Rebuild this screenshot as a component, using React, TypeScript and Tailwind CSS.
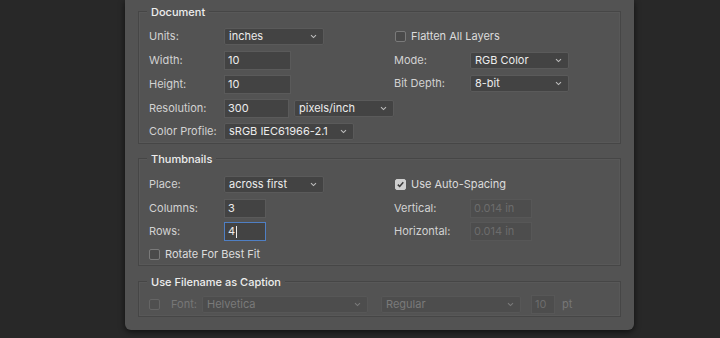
import React from "react";

const Chevron = ({ dim = false }: { dim?: boolean }) => (
  <svg width="7" height="5" viewBox="0 0 7 5" className="shrink-0">
    <path d="M1 1.2 L3.5 3.6 L6 1.2" fill="none" stroke={dim ? "#7a7a7a" : "#bdbdbd"} strokeWidth="1.1" />
  </svg>
);

const Select = ({ value, w, dim = false }: { value: string; w: string; dim?: boolean }) => (
  <div
    className={`${w} h-[17px] flex items-center justify-between pl-[4px] pr-[6px] rounded-[2px] border ${
      dim ? "bg-[#4d4d4d] border-[#575757] text-[#7a7a7a]" : "bg-[#434343] border-[#5a5a5a] text-[#ececec]"
    }`}
  >
    <span className="leading-none">{value}</span>
    <Chevron dim={dim} />
  </div>
);

const Input = ({ value, w, dim = false, focus = false }: { value: string; w: string; dim?: boolean; focus?: boolean }) => (
  <div
    className={`${w} h-[19px] flex items-center pl-[3px] border ${
      focus
        ? "bg-[#434343] border-[#4f7fc4] text-[#ececec]"
        : dim
        ? "bg-[#4d4d4d] border-[#575757] text-[#6c6c6c]"
        : "bg-[#434343] border-[#5a5a5a] text-[#ececec]"
    }`}
  >
    <span className="leading-none">{value}</span>
    {focus && <span className="w-px h-[12px] bg-[#ececec] ml-[1px]" />}
  </div>
);

const Check = ({ checked = false, dim = false }: { checked?: boolean; dim?: boolean }) => (
  <div
    className={`w-[11px] h-[11px] rounded-[2px] border flex items-center justify-center ${
      checked ? "bg-[#cfcfcf] border-[#cfcfcf]" : dim ? "bg-[#4f4f4f] border-[#656565]" : "bg-[#4a4a4a] border-[#7a7a7a]"
    }`}
  >
    {checked && (
      <svg width="9" height="9" viewBox="0 0 9 9">
        <path d="M1.8 4.6 L3.7 6.5 L7.3 2.2" fill="none" stroke="#3a3a3a" strokeWidth="1.5" />
      </svg>
    )}
  </div>
);

const Group = ({ title, h, children, pt }: { title: string; h: string; pt: string; children: React.ReactNode }) => (
  <div className={`relative ${h} ${pt} border border-[#464646] shadow-[inset_0_0_0_1px_#585858] pl-[10px]`}>
    <span className="absolute -top-[8px] left-[8px] px-[4px] bg-[#535353] text-[#ededed] font-medium leading-[16px]">
      {title}
    </span>
    {children}
  </div>
);

const Label = ({ children, w = "w-[75px]", dim = false }: { children: React.ReactNode; w?: string; dim?: boolean }) => (
  <span className={`${w} shrink-0 ${dim ? "text-[#777]" : "text-[#d2d2d2]"}`}>{children}</span>
);

export default function App() {
  return (
    <div className="w-[720px] h-[338px] bg-[#282828] overflow-hidden text-[11px] font-['Inter',sans-serif]">
      <div className="ml-[125px] w-[509px] h-[330px] bg-[#535353] rounded-b-[6px] shadow-[0_2px_6px_rgba(0,0,0,0.6)] pt-[11px] px-[13px] flex flex-col">
        <Group title="Document" h="h-[133px]" pt="pt-[12px]">
          <div className="flex">
            <div className="w-[245px] flex flex-col">
              <div className="h-[24px] flex items-center">
                <Label>Units:</Label>
                <Select value="inches" w="w-[100px]" />
              </div>
              <div className="h-[24px] flex items-center">
                <Label>Width:</Label>
                <Input value="10" w="w-[67px]" />
              </div>
              <div className="h-[24px] flex items-center">
                <Label>Height:</Label>
                <Input value="10" w="w-[67px]" />
              </div>
              <div className="h-[24px] flex items-center">
                <Label>Resolution:</Label>
                <Input value="300" w="w-[67px]" />
                <div className="ml-[5px]">
                  <Select value="pixels/inch" w="w-[100px]" />
                </div>
              </div>
              <div className="h-[23px] flex items-center">
                <Label>Color Profile:</Label>
                <Select value="sRGB IEC61966-2.1" w="w-[130px]" />
              </div>
            </div>
            <div className="flex flex-col">
              <div className="h-[24px] flex items-center pl-[1px]">
                <Check />
                <span className="ml-[5px] text-[#dcdcdc]">Flatten All Layers</span>
              </div>
              <div className="h-[24px] flex items-center">
                <Label w="w-[76px]">Mode:</Label>
                <Select value="RGB Color" w="w-[99px]" />
              </div>
              <div className="h-[23px] flex items-center">
                <Label w="w-[76px]">Bit Depth:</Label>
                <Select value="8-bit" w="w-[99px]" />
              </div>
            </div>
          </div>
        </Group>

        <div className="h-[14px]" />

        <Group title="Thumbnails" h="h-[108px]" pt="pt-[14px]">
          <div className="flex">
            <div className="w-[245px] flex flex-col">
              <div className="h-[23px] flex items-center">
                <Label>Place:</Label>
                <Select value="across first" w="w-[100px]" />
              </div>
              <div className="h-[24px] flex items-center">
                <Label>Columns:</Label>
                <Input value="3" w="w-[42px]" />
              </div>
              <div className="h-[23px] flex items-center">
                <Label>Rows:</Label>
                <Input value="4" w="w-[42px]" focus />
              </div>
              <div className="h-[23px] flex items-center">
                <Check />
                <span className="ml-[5px] text-[#dcdcdc]">Rotate For Best Fit</span>
              </div>
            </div>
            <div className="flex flex-col">
              <div className="h-[23px] flex items-center pl-[1px]">
                <Check checked />
                <span className="ml-[5px] text-[#dcdcdc]">Use Auto-Spacing</span>
              </div>
              <div className="h-[24px] flex items-center">
                <Label w="w-[76px]">Vertical:</Label>
                <Input value="0.014 in" w="w-[62px]" dim />
              </div>
              <div className="h-[23px] flex items-center">
                <Label w="w-[76px]">Horizontal:</Label>
                <Input value="0.014 in" w="w-[62px]" dim />
              </div>
            </div>
          </div>
        </Group>

        <div className="h-[15px]" />

        <Group title="Use Filename as Caption" h="h-[36px]" pt="pt-[14px]">
          <div className="h-[17px] flex items-center">
            <Check dim />
            <span className="ml-[11px] w-[31px] text-[#777]">Font:</span>
            <Select value="Helvetica" w="w-[166px]" dim />
            <div className="ml-[13px]">
              <Select value="Regular" w="w-[140px]" dim />
            </div>
            <div className="ml-[10px]">
              <Input value="10" w="w-[24px]" dim />
            </div>
            <span className="ml-[7px] text-[#777]">pt</span>
          </div>
        </Group>
      </div>
    </div>
  );
}
